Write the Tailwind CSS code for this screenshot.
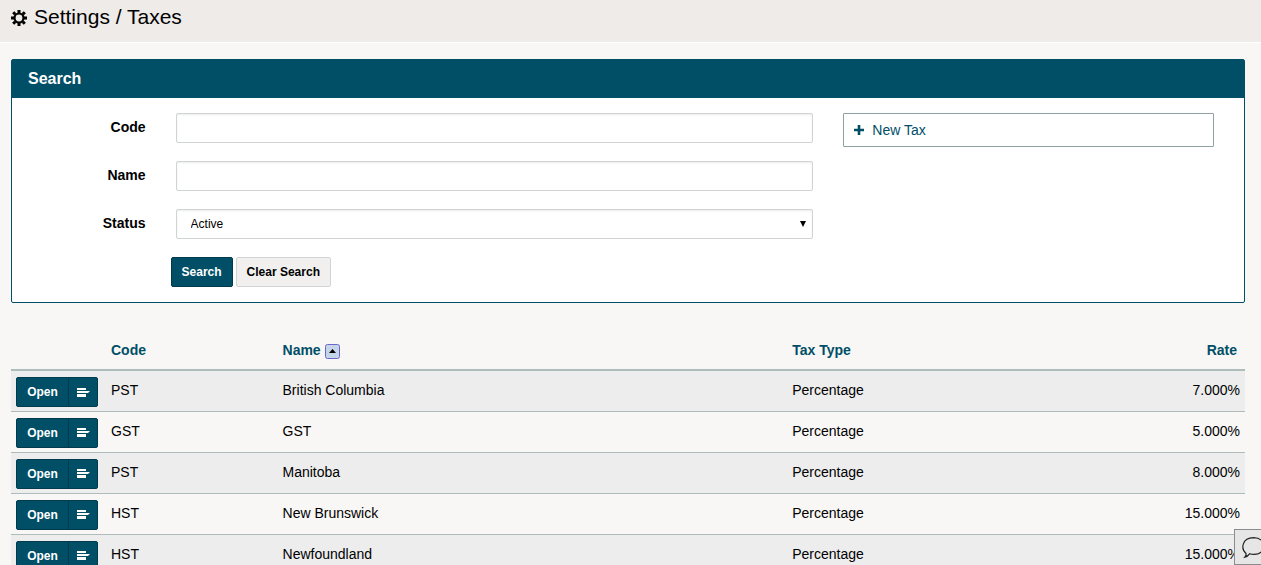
<!DOCTYPE html>
<html lang="en">
<head>
    <meta charset="UTF-8">
    <meta name="viewport" content="width=device-width, initial-scale=1.0">
    <title>Settings / Taxes</title>
    <script src="https://cdn.jsdelivr.net/npm/@tailwindcss/browser@4"></script>
</head>
<body class="bg-[#f9f7f6] font-['Liberation_Sans',Arial,sans-serif] text-sm text-black">
    <!-- Shared icons -->
    <svg class="hidden">
        <symbol id="menu" viewBox="0 0 13 9">
            <path d="M0 0h9v2H0zM0 3h13l-2 2H0zM0 6h9v3H0z" fill="currentColor"/>
        </symbol>
    </svg>

    <!-- Page title -->
    <header class="flex h-[43px] items-start gap-2 border-b border-white bg-[#eeebe8] pt-1 pl-[11px]">
        <svg class="mt-[6px] -mr-px h-4 w-4" viewBox="0 0 16 16" fill="none" stroke="#000">
            <circle cx="8" cy="8" r="4.500" stroke-width="2.200"/>
            <path d="M8 0v3M8 13v3M0 8h3M13 8h3M2.200 2.200l2 2M11.800 11.800l2 2M2.200 13.800l2-2M11.800 4.200l2-2" stroke-width="3"/>
        </svg>
        <h1 class="text-[21px] leading-[26px]">Settings / Taxes</h1>
    </header>

    <main class="mt-4 mr-4 ml-[11px]">
        <!-- Search panel -->
        <section class="rounded-xs border border-[#004f67] bg-white">
            <h2 class="bg-[#004f67] px-4 py-[7px] text-base font-bold text-white">Search</h2>
            <div class="grid grid-cols-3 px-[15px] py-[15px]">
                <form class="col-span-2">
                    <div class="mb-[18px] grid grid-cols-6">
                        <label for="code" class="pt-1 pr-[15px] text-right font-bold">Code</label>
                        <div class="col-span-5 px-[15px]">
                            <input id="code" type="text" class="block h-[30px] w-full rounded-xs border border-[#d0d4d4] bg-white px-3 text-xs shadow-[inset_0_1px_2px_#00000014]">
                        </div>
                    </div>
                    <div class="mb-[18px] grid grid-cols-6">
                        <label for="name" class="pt-1 pr-[15px] text-right font-bold">Name</label>
                        <div class="col-span-5 px-[15px]">
                            <input id="name" type="text" class="block h-[30px] w-full rounded-xs border border-[#d0d4d4] bg-white px-3 text-xs shadow-[inset_0_1px_2px_#00000014]">
                        </div>
                    </div>
                    <div class="mb-[18px] grid grid-cols-6">
                        <label for="status" class="pt-1 pr-[15px] text-right font-bold">Status</label>
                        <div class="relative col-span-5 px-[15px]">
                            <select id="status" class="block h-[30px] w-full appearance-none rounded-xs border border-[#d0d4d4] bg-white px-[14px] text-xs shadow-[inset_0_1px_2px_#00000014]">
                                <option>Active</option>
                                <option>Inactive</option>
                            </select>
                            <svg class="pointer-events-none absolute top-3 right-[22px] h-[6px] w-[6px]" viewBox="0 0 6 6"><path d="M0 0h6L3 6z"/></svg>
                        </div>
                    </div>
                    <div class="grid grid-cols-6">
                        <div class="col-span-5 col-start-2 flex gap-[3px] pl-[10px]">
                            <button type="submit" class="h-[30px] rounded-xs border border-[#003b4d] bg-[#004f67] px-[10px] text-xs font-bold text-white">Search</button>
                            <button type="reset" class="h-[30px] rounded-xs border border-[#d0d4d4] bg-[#f1f0ee] px-[10px] text-xs font-bold">Clear Search</button>
                        </div>
                    </div>
                </form>
                <div class="px-[15px]">
                    <a href="#new" class="flex h-[34px] items-center gap-2 rounded-[1px] border border-[#8fa1a1] px-[10px] text-[#004f67]">
                        <svg class="h-[10px] w-[10px]" viewBox="0 0 10 10"><path d="M3.700 0h2.600v3.700H10v2.600H6.300V10H3.700V6.300H0V3.700h3.700z" fill="currentColor"/></svg>
                        New Tax
                    </a>
                </div>
            </div>
        </section>

        <!-- Tax list -->
        <table class="mt-[26px] w-full table-fixed border-collapse">
            <thead>
                <tr class="h-[41px] border-b-2 border-[#aebcbb] text-left text-[#004f67]">
                    <th class="w-[95px]"></th>
                    <th class="w-[13.9%] px-[5px] pt-[2px]"><a href="#code">Code</a></th>
                    <th class="w-[41.3%] px-[5px] pt-[2px]">
                        <a href="#name" class="flex items-center gap-1">Name
                            <svg class="mt-[2px] h-[15px] w-[15px]" viewBox="0 0 15 15"><rect x=".5" y=".5" width="14" height="14" rx="2" fill="#c5d5e8" stroke="#6a66cc"/><path d="M4 9h7L7.500 5z" fill="#000"/></svg>
                        </a>
                    </th>
                    <th class="px-[5px] pt-[2px]"><a href="#type">Tax Type</a></th>
                    <th class="px-2 pt-[2px] text-right"><a href="#rate">Rate</a></th>
                </tr>
            </thead>
            <tbody>
                <tr class="h-[41px] border-b border-[#aebcbb] align-top odd:bg-[#ededed]">
                    <td class="pt-[6px] pl-[5px]">
                        <div class="flex h-[30px] w-[82px] rounded-xs border border-[#003b4d] bg-[#004f67] text-white">
                            <button class="w-[52px] border-r border-[#003b4d] text-xs font-bold">Open</button>
                            <button class="flex flex-1 items-center justify-center" aria-label="Options"><svg class="h-[9px] w-[13px]"><use href="#menu"/></svg></button>
                        </div>
                    </td>
                    <td class="px-[5px] pt-[9px]">PST</td>
                    <td class="px-[5px] pt-[9px]">British Columbia</td>
                    <td class="px-[5px] pt-[9px]">Percentage</td>
                    <td class="px-[5px] pt-[9px] text-right">7.000%</td>
                </tr>
                <tr class="h-[41px] border-b border-[#aebcbb] align-top odd:bg-[#ededed]">
                    <td class="pt-[6px] pl-[5px]">
                        <div class="flex h-[30px] w-[82px] rounded-xs border border-[#003b4d] bg-[#004f67] text-white">
                            <button class="w-[52px] border-r border-[#003b4d] text-xs font-bold">Open</button>
                            <button class="flex flex-1 items-center justify-center" aria-label="Options"><svg class="h-[9px] w-[13px]"><use href="#menu"/></svg></button>
                        </div>
                    </td>
                    <td class="px-[5px] pt-[9px]">GST</td>
                    <td class="px-[5px] pt-[9px]">GST</td>
                    <td class="px-[5px] pt-[9px]">Percentage</td>
                    <td class="px-[5px] pt-[9px] text-right">5.000%</td>
                </tr>
                <tr class="h-[41px] border-b border-[#aebcbb] align-top odd:bg-[#ededed]">
                    <td class="pt-[6px] pl-[5px]">
                        <div class="flex h-[30px] w-[82px] rounded-xs border border-[#003b4d] bg-[#004f67] text-white">
                            <button class="w-[52px] border-r border-[#003b4d] text-xs font-bold">Open</button>
                            <button class="flex flex-1 items-center justify-center" aria-label="Options"><svg class="h-[9px] w-[13px]"><use href="#menu"/></svg></button>
                        </div>
                    </td>
                    <td class="px-[5px] pt-[9px]">PST</td>
                    <td class="px-[5px] pt-[9px]">Manitoba</td>
                    <td class="px-[5px] pt-[9px]">Percentage</td>
                    <td class="px-[5px] pt-[9px] text-right">8.000%</td>
                </tr>
                <tr class="h-[41px] border-b border-[#aebcbb] align-top odd:bg-[#ededed]">
                    <td class="pt-[6px] pl-[5px]">
                        <div class="flex h-[30px] w-[82px] rounded-xs border border-[#003b4d] bg-[#004f67] text-white">
                            <button class="w-[52px] border-r border-[#003b4d] text-xs font-bold">Open</button>
                            <button class="flex flex-1 items-center justify-center" aria-label="Options"><svg class="h-[9px] w-[13px]"><use href="#menu"/></svg></button>
                        </div>
                    </td>
                    <td class="px-[5px] pt-[9px]">HST</td>
                    <td class="px-[5px] pt-[9px]">New Brunswick</td>
                    <td class="px-[5px] pt-[9px]">Percentage</td>
                    <td class="px-[5px] pt-[9px] text-right">15.000%</td>
                </tr>
                <tr class="h-[41px] border-b border-[#aebcbb] align-top odd:bg-[#ededed]">
                    <td class="pt-[6px] pl-[5px]">
                        <div class="flex h-[30px] w-[82px] rounded-xs border border-[#003b4d] bg-[#004f67] text-white">
                            <button class="w-[52px] border-r border-[#003b4d] text-xs font-bold">Open</button>
                            <button class="flex flex-1 items-center justify-center" aria-label="Options"><svg class="h-[9px] w-[13px]"><use href="#menu"/></svg></button>
                        </div>
                    </td>
                    <td class="px-[5px] pt-[9px]">HST</td>
                    <td class="px-[5px] pt-[9px]">Newfoundland</td>
                    <td class="px-[5px] pt-[9px]">Percentage</td>
                    <td class="px-[5px] pt-[9px] text-right">15.000%</td>
                </tr>
            </tbody>
        </table>
    </main>

    <!-- Chat tab -->
    <button class="fixed -right-3 bottom-0 h-9 w-[39px] border border-[#8c8c8c] bg-[#e6e6e6] pl-[7px]" aria-label="Chat">
        <svg class="h-6 w-6" viewBox="0 0 24 24" fill="none" stroke="#222" stroke-width="1.200"><path d="M4 18.500C-1.500 13.500 0 3 11.500 2.600 25 2.600 26 19 12 19.400c-1.600 0-3-.2-4.200-.7C6.500 20.500 5 21.800 2.800 22.200 4 21 4.300 20 4 18.500z"/></svg>
    </button>
</body>
</html>
